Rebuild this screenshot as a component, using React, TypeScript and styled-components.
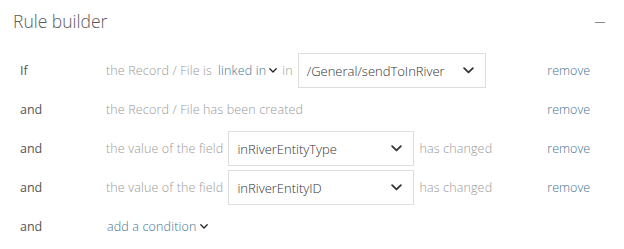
import React from "react";
import styled, { createGlobalStyle } from "styled-components";

const Global = createGlobalStyle`
  html, body { margin: 0; padding: 0; background: #fff; }
  body { font-family: "Open Sans", "Noto Sans", sans-serif; }
`;

const Panel = styled.div`
  width: 624px;
  height: 249px;
  box-sizing: border-box;
  padding: 7px 19px 0 13px;
  display: flex;
  flex-direction: column;
`;

const Header = styled.div`
  display: flex;
  align-items: center;
  justify-content: space-between;
  height: 28px;
`;

const Title = styled.h2`
  margin: 0;
  font-size: 17.5px;
  font-weight: 300;
  color: #5a5a5a;
`;

const Collapse = styled.span`
  width: 10px;
  height: 1px;
  background: #888;
  margin-top: 2px;
`;

const Rules = styled.div`
  margin-top: 16px;
  display: flex;
  flex-direction: column;
`;

const Row = styled.div`
  display: grid;
  grid-template-columns: 86px 1fr auto;
  align-items: center;
  height: 39px;
  padding-left: 7px;
  font-size: 12.5px;
`;

const Label = styled.span`
  color: #555;
`;

const Condition = styled.div`
  display: flex;
  align-items: center;
  gap: 5px;
  color: #999;
  font-weight: 300;
  letter-spacing: 0.15px;
  white-space: nowrap;
`;

const Link = styled.span`
  color: #3f7592;
  font-weight: 300;
  display: inline-flex;
  align-items: center;
  gap: 3px;
  margin-left: 1px;
  cursor: pointer;
`;

const Select = styled.div<{ $w: number }>`
  width: ${(p) => p.$w}px;
  height: 35px;
  box-sizing: border-box;
  border: 1px solid #dedede;
  display: flex;
  align-items: center;
  justify-content: space-between;
  padding: 0 11px 0 8px;
  color: #333;
  font-size: 13px;
  font-weight: 300;
  letter-spacing: 0;
`;

const Remove = styled.span`
  color: #3f7592;
  font-weight: 300;
  padding-right: 15px;
  cursor: pointer;
`;

const Chevron = ({ size = 10, color = "#333" }: { size?: number; color?: string }) => (
  <svg width={size} height={size * 0.65} viewBox="0 0 10 6.5" fill="none">
    <path d="M1 1l4 4 4-4" stroke={color} strokeWidth="1.6" strokeLinecap="round" strokeLinejoin="round" />
  </svg>
);

const Dropdown = ({ value, width }: { value: string; width: number }) => (
  <Select $w={width}>
    <span>{value}</span>
    <Chevron size={11} color="#333" />
  </Select>
);

export default function App() {
  return (
    <>
      <Global />
      <Panel>
        <Header>
          <Title>Rule builder</Title>
          <Collapse />
        </Header>
        <Rules>
          <Row>
            <Label>If</Label>
            <Condition>
              the Record / File is
              <Link>
                linked in <Chevron size={8} color="#222" />
              </Link>
              in
              <Dropdown value="/General/sendToInRiver" width={188} />
            </Condition>
            <Remove>remove</Remove>
          </Row>
          <Row>
            <Label>and</Label>
            <Condition>the Record / File has been created</Condition>
            <Remove>remove</Remove>
          </Row>
          <Row>
            <Label>and</Label>
            <Condition>
              the value of the field
              <Dropdown value="inRiverEntityType" width={186} />
              has changed
            </Condition>
            <Remove>remove</Remove>
          </Row>
          <Row>
            <Label>and</Label>
            <Condition>
              the value of the field
              <Dropdown value="inRiverEntityID" width={186} />
              has changed
            </Condition>
            <Remove>remove</Remove>
          </Row>
          <Row>
            <Label>and</Label>
            <Condition>
              <Link>
                add a condition <Chevron size={8} color="#222" />
              </Link>
            </Condition>
            <span />
          </Row>
        </Rules>
      </Panel>
    </>
  );
}
